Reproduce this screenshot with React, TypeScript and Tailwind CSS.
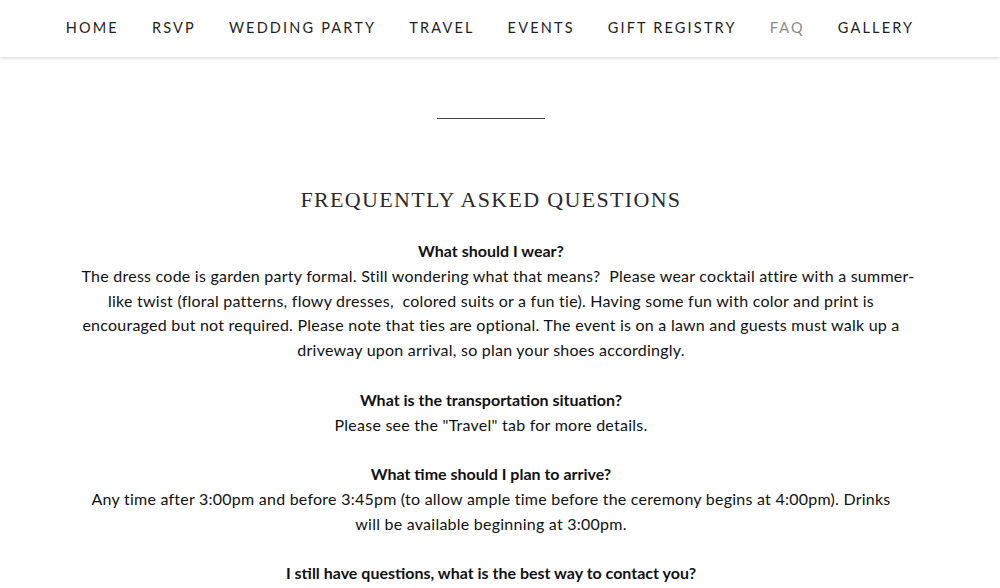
const NAV = [
	"HOME",
	"RSVP",
	"WEDDING PARTY",
	"TRAVEL",
	"EVENTS",
	"GIFT REGISTRY",
	"FAQ",
	"GALLERY",
];

const FAQS: Array<{ q: string; a: string[] }> = [
	{
		q: "What should I wear?",
		a: [
			"The dress code is garden party formal. Still wondering what that means?\u00a0 Please wear cocktail attire with a summer-",
			"like twist (floral patterns, flowy dresses,\u00a0 colored suits or a fun tie). Having some fun with color and print is",
			"encouraged but not required. Please note that ties are optional. The event is on a lawn and guests must walk up a",
			"driveway upon arrival, so plan your shoes accordingly.",
		],
	},
	{
		q: "What is the transportation situation?",
		a: ['Please see the "Travel" tab for more details.'],
	},
	{
		q: "What time should I plan to arrive?",
		a: [
			"Any time after 3:00pm and before 3:45pm (to allow ample time before the ceremony begins at 4:00pm). Drinks",
			"will be available beginning at 3:00pm.",
		],
	},
	{
		q: "I still have questions, what is the best way to contact you?",
		a: ["Please reach out to us directly and we will be happy to help."],
	},
];

export default function App() {
	return (
		<div className="min-h-screen bg-white font-['Lato','Liberation_Sans',sans-serif] text-[#111]">
			{/* Top nav */}
			<header className="h-[57px] bg-white shadow-[0_1px_3px_rgba(0,0,0,0.18)] flex items-center justify-center pr-[20px]">
				<nav className="flex items-center gap-[33px]">
					{NAV.map((item) => (
						<a
							key={item}
							className={`text-[14.5px] tracking-[0.15em] leading-none ${
								item === "FAQ" ? "text-[#8a8a8a]" : "text-[#1e1e1e]"
							}`}
						>
							{item}
						</a>
					))}
				</nav>
			</header>

			<main className="flex flex-col items-center pr-[18px]">
				<div className="mt-[61px] w-[108px] h-px bg-[#444]" />

				<h1 className="mt-[70px] font-['Liberation_Serif','DejaVu_Serif',serif] text-[22px] tracking-[0.06em] text-[#2a2a2a] leading-none">
					FREQUENTLY ASKED QUESTIONS
				</h1>

				<div className="mt-[28px] flex flex-col gap-[24.8px] text-center text-[16px] leading-[24.8px]">
					{FAQS.map((f, i) => (
						<div key={f.q}>
							<p className="font-bold">{f.q}</p>
							{f.a.map((line, j) => (
								<p
									key={line}
									className={`whitespace-pre tracking-[0.015em] ${
										i === 0 && j === 0 ? "pl-[14px]" : ""
									}`}
								>
									{line}
								</p>
							))}
						</div>
					))}
				</div>
			</main>
		</div>
	);
}
